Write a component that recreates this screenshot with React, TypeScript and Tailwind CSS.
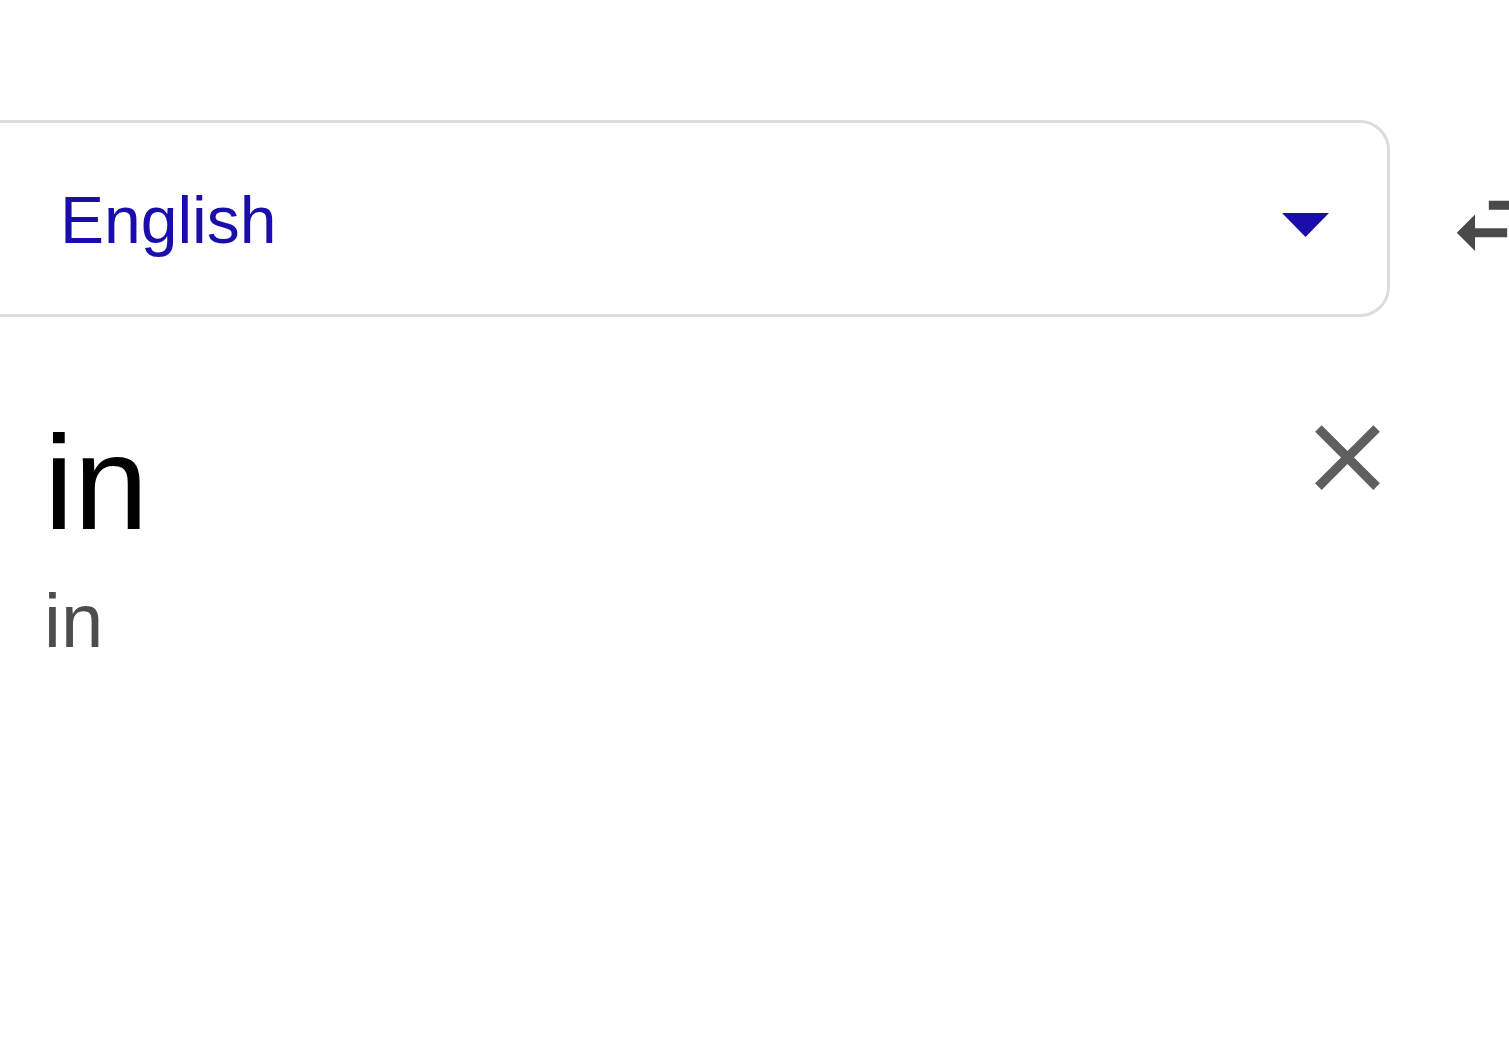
import React from "react";

export default function App() {
  return (
    <div
      className="relative w-full h-[1048px] overflow-hidden bg-white pt-[120px]"
      style={{ fontFamily: '"Liberation Sans", Arial, sans-serif' }}
    >
      <div className="flex items-center gap-[53px] ml-[-30px]">
        <div className="shrink-0 w-[1420px] h-[197px] border-[3px] border-[#dadce0] rounded-[30px] flex items-center justify-between pl-[87px] pr-[58px]">
          <span className="text-[66px] leading-[66px] text-[#1a0dab] mt-[2px]">English</span>
          <svg width="47" height="24" viewBox="0 0 47 24" className="mt-[13px]">
            <polygon points="0,0 47,0 23.5,24" fill="#1a0dab" />
          </svg>
        </div>
        <svg width="110" height="110" viewBox="0 0 24 24" className="shrink-0" fill="#4a4a4a">
          <path d="M6.99 11L3 15l3.99 4v-3H14v-2H6.99v-3zM21 9l-3.99-4v3H10v2h7.01v3L21 9z" />
        </svg>
      </div>
      <div className="flex items-start justify-between w-[1403px] pl-[44px] mt-[85px]">
        <div className="flex flex-col">
          <span className="text-[134px] leading-[134px] text-black mt-[14px]">in</span>
          <span className="text-[76px] leading-[76px] text-[#4d4d4d] mt-[33px]">in</span>
        </div>
        <svg width="111" height="111" viewBox="0 0 24 24" className="shrink-0" fill="#5f5f5f">
          <path d="M19 6.41L17.59 5 12 10.59 6.41 5 5 6.41 10.59 12 5 17.59 6.41 19 12 13.41 17.59 19 19 17.59 13.41 12z" />
        </svg>
      </div>
    </div>
  );
}
